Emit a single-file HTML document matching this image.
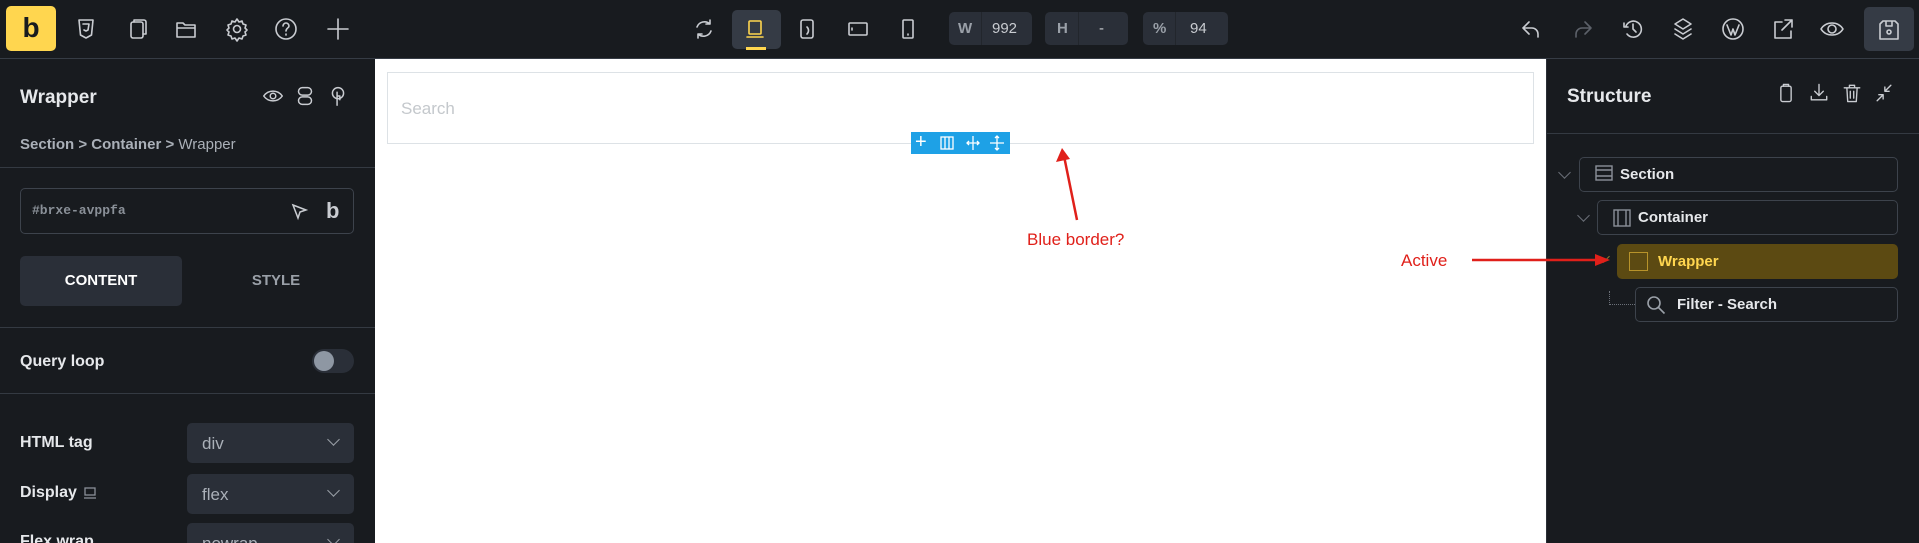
<!DOCTYPE html>
<html><head><meta charset="utf-8"><style>
*{box-sizing:border-box;margin:0;padding:0}
html,body{width:1919px;height:543px;overflow:hidden}
body{background:#fff;font-family:"Liberation Sans",sans-serif;position:relative}
.a{position:absolute}
.top{left:0;top:0;width:1919px;height:59px;background:#181b1f;border-bottom:1px solid #363c45}
.ic{position:absolute;width:28px;height:28px;stroke:#c9ccd1;fill:none;stroke-width:1.6;stroke-linecap:round;stroke-linejoin:round}
.left{left:0;top:59px;width:375px;height:484px;background:#181b1f;color:#e6e8eb;overflow:hidden}
.right{left:1546px;top:59px;width:373px;height:484px;background:#181b1f;color:#e6e8eb;border-left:1px solid #2a2f36;overflow:hidden}
.hr{position:absolute;left:0;right:0;height:1px;background:#343a42}
.box{position:absolute;background:#2a2f38;border-radius:5px;color:#c9ccd1;font-size:16px}
.lbl{position:absolute;left:20px;font-size:16px;font-weight:bold;color:#e6e8eb}
.sel{position:absolute;left:187px;width:167px;height:40px;background:#2a2f38;border-radius:5px;color:#aab0b8;font-size:17px;padding:11px 15px}
.sel:after{content:"";position:absolute;right:16px;top:12px;width:8px;height:8px;border-right:1.5px solid #9aa0a8;border-bottom:1.5px solid #9aa0a8;transform:rotate(45deg)}
.node{position:absolute;right:21px;height:35px;border:1px solid #3d434c;border-radius:5px;font-size:15px;font-weight:bold;color:#e6e8eb;padding:8px 0 0 40px}
.chev{position:absolute;width:9px;height:9px;border-right:1.4px solid #6b7078;border-bottom:1.4px solid #6b7078;transform:rotate(45deg)}
.red{color:#e0201a;font-size:17px;font-family:"Liberation Sans",sans-serif}
</style></head><body>
<div class="a top">
 <div class="a" style="left:6px;top:6px;width:50px;height:45px;background:#ffd64f;border-radius:5px;font-weight:bold;font-size:28px;color:#181b1f;text-align:center;line-height:43px">b</div>
 <svg class="ic" style="left:72px;top:15px" viewBox="0 0 28 28"><path d="M7 5h14l-1.5 15L14 23l-5.5-3z M11 9h6l-1 6-2 1-2-1"/></svg>
 <svg class="ic" style="left:123px;top:15px" viewBox="0 0 28 28"><rect x="8" y="7" width="12" height="16" rx="2"/><path d="M11 7V5h10a2 2 0 012 2v12h-3"/></svg>
 <svg class="ic" style="left:172px;top:15px" viewBox="0 0 28 28"><path d="M5 8h6l2 2h10v12H5z M5 13h18"/></svg>
 <svg class="ic" style="left:223px;top:15px" viewBox="0 0 28 28"><circle cx="14" cy="14" r="3.5"/><path d="M14 4l2 3 3-1 1 3 3 1-1 3 2 2-2 2 1 3-3 1-1 3-3-1-2 3-2-3-3 1-1-3-3-1 1-3-2-2 2-2-1-3 3-1 1-3 3 1z"/></svg>
 <svg class="ic" style="left:272px;top:15px" viewBox="0 0 28 28"><circle cx="14" cy="14" r="10"/><path d="M11 11a3 3 0 116 0c0 2-3 2-3 5M14 19v1"/></svg>
 <svg class="ic" style="left:324px;top:15px" viewBox="0 0 28 28"><path d="M14 4v20M4 14h20"/></svg>
 <svg class="ic" style="left:690px;top:15px" viewBox="0 0 28 28"><path d="M20 9a8 8 0 00-13 3M8 19a8 8 0 0013-3M20 5v4h-4M8 23v-4h4"/></svg>
 <div class="a" style="left:732px;top:10px;width:49px;height:39px;background:#353b45;border-radius:5px"></div>
 <div class="a" style="left:746px;top:47px;width:20px;height:3px;background:#ffd64f"></div>
 <svg class="ic" style="left:741px;top:15px;stroke:#ffd64f" viewBox="0 0 28 28"><rect x="8" y="6" width="12" height="13" rx="1"/><path d="M6 22h16"/></svg>
 <svg class="ic" style="left:793px;top:15px" viewBox="0 0 28 28"><rect x="8" y="5" width="12" height="18" rx="2"/><path d="M14 12c2 2 2 5 0 7"/></svg>
 <svg class="ic" style="left:844px;top:15px" viewBox="0 0 28 28"><rect x="5" y="8" width="18" height="12" rx="1"/><path d="M8 13v2"/></svg>
 <svg class="ic" style="left:894px;top:15px" viewBox="0 0 28 28"><rect x="9" y="5" width="10" height="18" rx="1"/><path d="M14 19v1"/></svg>
 <div class="box" style="left:949px;top:12px;width:83px;height:33px;font-size:15px"><span style="position:absolute;left:9px;top:8px;font-weight:bold;color:#9aa0a8">W</span><span style="position:absolute;left:32px;top:0;width:1px;height:33px;background:#22262c"></span><span style="position:absolute;left:43px;top:8px">992</span></div>
 <div class="box" style="left:1045px;top:12px;width:83px;height:33px;font-size:15px"><span style="position:absolute;left:12px;top:8px;font-weight:bold;color:#9aa0a8">H</span><span style="position:absolute;left:33px;top:0;width:1px;height:33px;background:#22262c"></span><span style="position:absolute;left:54px;top:8px">-</span></div>
 <div class="box" style="left:1143px;top:12px;width:85px;height:33px;font-size:15px"><span style="position:absolute;left:10px;top:8px;font-weight:bold;color:#9aa0a8">%</span><span style="position:absolute;left:32px;top:0;width:1px;height:33px;background:#22262c"></span><span style="position:absolute;left:47px;top:8px">94</span></div>
 <svg class="ic" style="left:1517px;top:15px" viewBox="0 0 28 28"><path d="M12 7l-6 6 6 6M6 13h9a6 6 0 016 6v3"/></svg>
 <svg class="ic" style="left:1569px;top:15px;stroke:#5c6169" viewBox="0 0 28 28"><path d="M16 7l6 6-6 6M22 13h-9a6 6 0 00-6 6v3"/></svg>
 <svg class="ic" style="left:1619px;top:15px" viewBox="0 0 28 28"><path d="M7 11a8 8 0 111 8M5 8v4h4M14 9v5l3 3"/></svg>
 <svg class="ic" style="left:1669px;top:15px" viewBox="0 0 28 28"><path d="M14 4l8 5-8 5-8-5z M6 14l8 5 8-5M6 19l8 5 8-5"/></svg>
 <svg class="ic" style="left:1719px;top:15px" viewBox="0 0 28 28"><circle cx="14" cy="14" r="10"/><path d="M8 10l4 10 2-6 2 6 4-10"/></svg>
 <svg class="ic" style="left:1769px;top:15px" viewBox="0 0 28 28"><path d="M13 7H6v16h16v-7M16 5h7v7M23 5L13 15"/></svg>
 <svg class="ic" style="left:1818px;top:15px" viewBox="0 0 28 28"><path d="M3 14c5-8 17-8 22 0-5 8-17 8-22 0z"/><circle cx="14" cy="14" r="4"/></svg>
 <div class="a" style="left:1864px;top:7px;width:50px;height:44px;background:#353b45;border-radius:5px"></div>
 <svg class="ic" style="left:1875px;top:15px" viewBox="0 0 28 28"><path d="M8 6h12l3 3v15H5V9z M11 6v5h6V6"/><circle cx="14" cy="17" r="2"/></svg>
</div>

<div class="a left">
 <div class="a" style="left:20px;top:28px;font-size:19px;font-weight:bold">Wrapper</div>
 <svg class="ic" style="left:260px;top:24px;width:26px;height:26px" viewBox="0 0 28 28"><path d="M4 14c5-7 15-7 20 0-5 7-15 7-20 0z"/><circle cx="14" cy="14" r="3"/></svg>
 <svg class="ic" style="left:292px;top:24px;width:26px;height:26px" viewBox="0 0 28 28"><rect x="7" y="5" width="14" height="8" rx="4"/><rect x="7" y="15" width="14" height="8" rx="4"/></svg>
 <svg class="ic" style="left:325px;top:24px;width:26px;height:26px" viewBox="0 0 28 28"><circle cx="14" cy="11" r="6"/><path d="M13 10v14M13 14h3v4"/></svg>
 <div class="a" style="left:20px;top:77px;font-size:15px;font-weight:bold;color:#aab0b8">Section &gt; Container &gt; <span style="font-weight:normal">Wrapper</span></div>
 <div class="hr" style="top:108px"></div>
 <div class="a" style="left:20px;top:129px;width:334px;height:46px;border:1px solid #3d434c;border-radius:5px">
  <span style="position:absolute;left:11px;top:14px;font-family:'Liberation Mono',monospace;font-size:13px;font-weight:bold;color:#8a9098">#brxe-avppfa</span>
  <svg style="position:absolute;left:268px;top:12px;width:20px;height:20px;fill:none;stroke:#c9ccd1;stroke-width:1.5" viewBox="0 0 20 20"><path d="M4 4l13 5-6 2-2 6z"/></svg>
  <span style="position:absolute;left:305px;top:9px;font-size:22px;font-weight:bold;color:#c9ccd1">b</span>
 </div>
 <div class="a" style="left:20px;top:197px;width:162px;height:50px;background:#2a2f38;border-radius:5px;text-align:center;line-height:50px;font-weight:bold;font-size:15px;color:#fff">CONTENT</div>
 <div class="a" style="left:195px;top:197px;width:162px;height:50px;text-align:center;line-height:50px;font-weight:bold;font-size:15px;color:#9aa0a8">STYLE</div>
 <div class="hr" style="top:268px"></div>
 <div class="lbl" style="top:294px;font-weight:bold">Query loop</div>
 <div class="a" style="left:312px;top:290px;width:42px;height:24px;background:#2a2f38;border-radius:12px"><div style="position:absolute;left:2px;top:2px;width:20px;height:20px;border-radius:50%;background:#8e97a3"></div></div>
 <div class="hr" style="top:334px"></div>
 <div class="lbl" style="top:375px">HTML tag</div>
 <div class="sel" style="top:364px">div</div>
 <div class="lbl" style="top:425px">Display</div>
 <svg style="position:absolute;left:83px;top:427px;width:14px;height:14px;fill:none;stroke:#8a9098;stroke-width:1.3" viewBox="0 0 14 14"><rect x="2" y="2" width="10" height="7"/><path d="M1 12h12"/></svg>
 <div class="sel" style="top:415px">flex</div>
 <div class="lbl" style="top:474px">Flex wrap</div>
 <div class="sel" style="top:464px">nowrap</div>
</div>

<div class="a" style="left:387px;top:72px;width:1147px;height:72px;border:1px solid #dde2e6"></div>
<div class="a" style="left:401px;top:99px;font-size:17px;color:#c4c8cc">Search</div>
<div class="a" style="left:911px;top:132px;width:99px;height:22px;background:#1ea1e6"></div>
<div class="a" style="left:915px;top:131px;color:#fff;font-size:20px;line-height:22px">+</div>
<svg class="a" style="left:940px;top:136px" width="14" height="14" viewBox="0 0 14 14" fill="none" stroke="#fff" stroke-width="1.3"><rect x="1" y="1" width="12" height="12"/><path d="M5 1v12M9 1v12"/></svg>
<svg class="a" style="left:966px;top:136px" width="14" height="14" viewBox="0 0 14 14" fill="none" stroke="#fff" stroke-width="1.3"><path d="M7 0v14M1 7h12M3 5l-2 2 2 2M11 5l2 2-2 2"/></svg>
<svg class="a" style="left:990px;top:135px" width="14" height="16" viewBox="0 0 14 16" fill="none" stroke="#fff" stroke-width="1.3"><path d="M0 8h14M7 1v14M5 3l2-2 2 2M5 13l2 2 2-2"/></svg>

<svg class="a" style="left:1040px;top:140px" width="50" height="90" viewBox="0 0 50 90"><path d="M37 80L24 16" stroke="#e0201a" stroke-width="2.5"/><path d="M22 8l-6 14 14-3z" fill="#e0201a"/></svg>
<div class="a red" style="left:1027px;top:230px">Blue border?</div>
<div class="a red" style="left:1401px;top:251px">Active</div>

<div class="a right">
 <div class="a" style="left:20px;top:27px;font-size:19px;font-weight:bold">Structure</div>
 <svg class="ic" style="left:227px;top:22px;width:24px;height:24px" viewBox="0 0 28 28"><rect x="8" y="6" width="12" height="18" rx="2"/><path d="M11 6V4h6v2"/></svg>
 <svg class="ic" style="left:260px;top:22px;width:24px;height:24px" viewBox="0 0 28 28"><path d="M14 4v13M9 12l5 5 5-5M5 18v4h18v-4"/></svg>
 <svg class="ic" style="left:293px;top:22px;width:24px;height:24px" viewBox="0 0 28 28"><path d="M5 8h18M11 8V5h6v3M8 8l1 16h10l1-16M12 12v8M16 12v8"/></svg>
 <svg class="ic" style="left:325px;top:22px;width:24px;height:24px" viewBox="0 0 28 28"><path d="M22 5l-7 7M15 7v5h5M6 23l7-7M8 16h5v5"/></svg>
 <div class="hr" style="top:74px"></div>
 <div class="chev" style="left:13px;top:109px"></div>
 <div class="node" style="left:32px;top:98px">Section</div>
 <svg class="a" style="left:47px;top:105px" width="20" height="20" viewBox="0 0 20 20" fill="none" stroke="#8a9098" stroke-width="1.4"><rect x="2" y="2" width="16" height="14"/><path d="M2 6h16M2 12h16"/></svg>
 <div class="chev" style="left:32px;top:152px"></div>
 <div class="node" style="left:50px;top:141px">Container</div>
 <svg class="a" style="left:65px;top:149px" width="20" height="20" viewBox="0 0 20 20" fill="none" stroke="#8a9098" stroke-width="1.4"><rect x="2" y="2" width="16" height="16"/><path d="M6 2v16M14 2v16"/></svg>
 <div class="chev" style="left:52px;top:193px;border-color:#8a7a30"></div>
 <div class="node" style="left:70px;top:185px;background:#5c4a12;border-color:#5c4a12;color:#ffd64f">Wrapper</div>
 <div class="a" style="left:82px;top:193px;width:19px;height:19px;border:1.5px solid #b8932a"></div>
 <div class="a" style="left:62px;top:232px;width:26px;height:14px;border-left:1px dotted #6b7078;border-bottom:1px dotted #6b7078"></div>
 <div class="node" style="left:88px;top:228px;padding-left:41px">Filter - Search</div>
 <svg class="a" style="left:98px;top:235px" width="22" height="22" viewBox="0 0 22 22" fill="none" stroke="#9aa0a8" stroke-width="1.6"><circle cx="9" cy="9" r="6"/><path d="M13.5 13.5l6 6"/></svg>
</div>
<svg class="a" style="left:1470px;top:250px" width="150" height="20" viewBox="0 0 150 20"><path d="M2 10h125" stroke="#e0201a" stroke-width="2.5"/><path d="M140 10l-15-6v12z" fill="#e0201a"/></svg>
</body></html>
